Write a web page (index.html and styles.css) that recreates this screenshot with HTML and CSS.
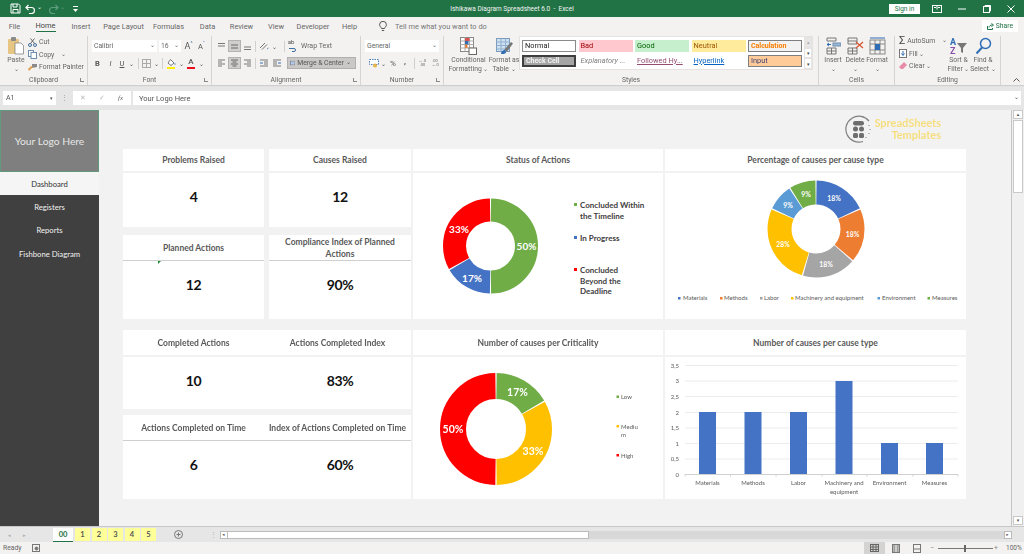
FILE: index.html
```html
<!DOCTYPE html>
<html lang="en">
<head>
<meta charset="utf-8">
<title>Ishikawa Diagram Spreadsheet 6.0 - Excel</title>
<link rel="stylesheet" href="styles.css">
</head>
<body>
<div class="app">
  <header class="titlebar">
    <div class="qat">
      <svg width="11" height="11" viewBox="0 0 11 11" fill="none" stroke="#fff"><path d="M1 1h7.500L10 2.500V10H1z"/><path d="M3 1v3h4V1M3 10V6.500h5V10"/></svg>
      <svg class="qat-undo" width="11" height="10" viewBox="0 0 11 10" fill="none" stroke="#fff" stroke-width="1.200"><path d="M3.500 1L1 3.500 3.500 6M1 3.500h5.500a3 3 0 0 1 0 6H4"/></svg>
      <span class="qat-caret">⌄</span>
      <svg class="qat-redo" width="11" height="10" viewBox="0 0 11 10" fill="none" stroke="#5f9d7f" stroke-width="1.200"><path d="M7.500 1L10 3.500 7.500 6M10 3.500H4.500a3 3 0 0 0 0 6H7"/></svg>
      <span class="qat-caret dim">⌄</span>
      <svg class="qat-more" width="7" height="8" viewBox="0 0 7 8" fill="#fff"><rect x="1" y="1" width="5" height="1"/><path d="M1 4h5L3.500 7z"/></svg>
    </div>
    <div class="doc-title">Ishikawa Diagram Spreadsheet 6.0&nbsp; -&nbsp; Excel</div>
    <div class="win">
      <button class="signin">Sign in</button>
      <svg class="win-ribbon" width="10" height="8" viewBox="0 0 10 8" fill="none" stroke="#fff"><rect x=".5" y=".5" width="9" height="7"/><path d="M5 .5v4M2 2.500h2M6 2.500h2"/></svg>
      <svg class="win-min" width="8" height="8" viewBox="0 0 8 8" stroke="#fff"><path d="M0 4h8"/></svg>
      <svg class="win-max" width="8" height="8" viewBox="0 0 8 8" fill="none" stroke="#fff"><rect x=".5" y="1.500" width="6" height="6"/><path d="M2 1.500V.5h5.500V6h-1"/></svg>
      <svg class="win-close" width="8" height="8" viewBox="0 0 8 8" stroke="#fff"><path d="M.5.5l7 7M7.500.5l-7 7"/></svg>
    </div>
  </header>

  <nav class="tabs">
    <span class="tab">File</span>
    <span class="tab tab-on"><span>Home</span></span>
    <span class="tab">Insert</span>
    <span class="tab">Page Layout</span>
    <span class="tab">Formulas</span>
    <span class="tab">Data</span>
    <span class="tab">Review</span>
    <span class="tab">View</span>
    <span class="tab">Developer</span>
    <span class="tab">Help</span>
    <svg class="bulb" width="8" height="11" viewBox="0 0 8 11" fill="none" stroke="#555"><path d="M2.500 7.500C2 6 .6 5.500.6 3.700a3.400 3.400 0 0 1 6.800 0C7.400 5.500 6 6 5.500 7.500zM2.800 9.500h2.400"/></svg>
    <span class="tellme">Tell me what you want to do</span>
    <span class="share"><svg width="7" height="7" viewBox="0 0 7 7" fill="none" stroke="#217346"><path d="M.5 3v3.500h5V5M2 4.500C2 3 3.500 2 5 2M4.500.5L6.500 2 4.500 3.500"/></svg>Share</span>
  </nav>

  <section class="ribbon">
    <div class="group g-clip">
      <div class="gbody">
        <div class="large paste">
          <svg width="16" height="18" viewBox="0 0 16 18"><rect x="0" y="2" width="11" height="15" rx="1" fill="#e7c582"/><rect x="3" y="0" width="5" height="4" rx="1" fill="#8a8a8a"/><path d="M7 6h6l2.500 2.500V17H7z" fill="#fff" stroke="#777" stroke-width=".7"/></svg>
          <span class="cap">Paste</span><span class="cap car">⌄</span>
        </div>
        <div class="clip-list">
          <div class="clip-row"><svg width="9" height="9" viewBox="0 0 9 9" fill="none" stroke="#3f6f9f"><circle cx="2" cy="7" r="1.500"/><circle cx="7" cy="7" r="1.500"/><path d="M2.500 5.500L6.500.5M6.500 5.500L2.500.5" stroke="#666"/></svg><span>Cut</span></div>
          <div class="clip-row"><svg width="9" height="9" viewBox="0 0 9 9" fill="#fff" stroke="#6d8db0"><rect x=".5" y=".5" width="5" height="6"/><rect x="3" y="2.500" width="5.500" height="6"/></svg><span>Copy</span><span class="car copy-car">⌄</span></div>
          <div class="clip-row"><svg width="9" height="9" viewBox="0 0 9 9"><path d="M4 1l5 0v3L4 5z" fill="#8a8a8a"/><path d="M5 4L1 8l-1-2 3-3z" fill="#e0a050"/></svg><span>Format Painter</span></div>
        </div>
      </div>
      <div class="glabel">Clipboard<i class="launch"></i></div>
    </div>

    <div class="group g-font">
      <div class="gbody stack">
        <div class="row">
          <span class="combo w65">Calibri<b>⌄</b></span>
          <span class="combo w22">16<b>⌄</b></span>
          <span class="ico w13 big-a">A<sup>^</sup></span>
          <span class="ico w13 small-a">A<sup>ˇ</sup></span>
        </div>
        <div class="row">
          <span class="ico w13 tb">B</span><span class="ico w13 ti">I</span><span class="ico w10 tu">U</span><span class="ico w8 car">⌄</span>
          <i class="vsep m4"></i>
          <span class="ico w12"><svg width="9" height="9" viewBox="0 0 9 9" fill="none" stroke="#aaa"><rect x=".5" y=".5" width="8" height="8"/><path d="M4.500 0v9M0 4.500h9"/></svg></span><span class="ico w8 car">⌄</span>
          <i class="vsep m2"></i>
          <span class="ico w12 under"><svg width="9" height="7" viewBox="0 0 9 7" fill="#fff" stroke="#777"><path d="M3.500.5L7 4 4 6.500 1 4z"/><circle cx="8" cy="5" r=".8" fill="#5b8bd0" stroke="none"/></svg><i class="bar-y"></i></span><span class="ico w8 car">⌄</span>
          <span class="ico w12 under fc">A<i class="bar-r"></i></span><span class="ico w8 car">⌄</span>
        </div>
      </div>
      <div class="glabel">Font<i class="launch"></i></div>
    </div>

    <div class="group g-align">
      <div class="gbody stack">
        <div class="row">
          <span class="ico w13"><svg class="lines" width="9" height="9" viewBox="0 0 9 9" stroke="#777"><path d="M1 1.500h7M1 4h7"/></svg></span>
          <span class="ico w13 on"><svg width="9" height="9" viewBox="0 0 9 9" stroke="#666"><path d="M1 3h7M1 6h7"/></svg></span>
          <span class="ico w13"><svg width="9" height="9" viewBox="0 0 9 9" stroke="#777"><path d="M1 5h7M1 7.500h7"/></svg></span>
          <i class="vsep m1"></i>
          <span class="ico w12 ml2"><svg width="10" height="9" viewBox="0 0 10 9" fill="none" stroke="#777"><path d="M1 6l5-5M3 7.500l5-5"/><path d="M8 7l1.500-1" stroke="#6d8db0"/></svg></span><span class="ico w8 car">⌄</span>
          <i class="vsep m6"></i>
          <span class="ico w12 wrapic"><svg width="10" height="11" viewBox="0 0 10 11" fill="none" stroke="#666"><path d="M1 7.500h5a1.500 1.500 0 0 1 0 3H4" stroke="#3f6f9f"/></svg></span>
          <span class="plain">Wrap Text</span>
        </div>
        <div class="row">
          <span class="ico w13"><svg width="9" height="8" viewBox="0 0 9 8" stroke="#777"><path d="M1 1h7M1 3h4M1 5h7M1 7h4"/></svg></span>
          <span class="ico w13 on"><svg width="9" height="8" viewBox="0 0 9 8" stroke="#666"><path d="M1 1h7M2.500 3h4M1 5h7M2.500 7h4"/></svg></span>
          <span class="ico w13"><svg width="9" height="8" viewBox="0 0 9 8" stroke="#777"><path d="M1 1h7M4 3h4M1 5h7M4 7h4"/></svg></span>
          <i class="vsep m1"></i>
          <span class="ico w12 ml2"><svg width="10" height="8" viewBox="0 0 10 8" stroke="#777"><path d="M1 1h8M5 3h4M5 5h4M1 7h8"/><path d="M1 4h3" stroke="#2f6db5"/></svg></span>
          <span class="ico w13"><svg width="10" height="8" viewBox="0 0 10 8" stroke="#777"><path d="M1 1h8M1 3h4M1 5h4M1 7h8"/><path d="M6 4h3" stroke="#2f6db5"/></svg></span>
          <span class="merge"><svg width="10" height="8" viewBox="0 0 10 8" fill="#fff" stroke="#667"><rect x=".5" y=".5" width="9" height="7"/><path d="M.5 2.500h9M.5 5.500h9" stroke="#2f6db5"/></svg><span>Merge &amp; Center</span><b>⌄</b></span>
        </div>
      </div>
      <div class="glabel">Alignment<i class="launch"></i></div>
    </div>

    <div class="group g-num">
      <div class="gbody stack">
        <div class="row"><span class="combo w74">General<b>⌄</b></span></div>
        <div class="row">
          <span class="ico w11 num-first"><svg width="10" height="9" viewBox="0 0 10 9"><rect x=".5" y=".5" width="9" height="5" fill="#fff" stroke="#4a7fc0" stroke-dasharray="1.500 1"/><circle cx="6" cy="6.500" r="2" fill="#e8b34a"/></svg></span><span class="ico w8 car">⌄</span>
          <span class="ico w12 tsym">%</span><span class="ico w12 tcomma">,</span>
          <i class="vsep m3"></i>
          <span class="ico w13 dec">←.0<br>.00</span><span class="ico w12 dec">.00<br>→.0</span>
        </div>
      </div>
      <div class="glabel">Number<i class="launch"></i></div>
    </div>

    <div class="group g-styles">
      <div class="gbody pad4">
        <div class="large w41">
          <svg width="17" height="18" viewBox="0 0 17 18"><rect x=".5" y=".5" width="13" height="14" fill="#fff" stroke="#888"/><path d="M.5 4h13M.5 7.500h13M.5 11h13M5 .5v14M9.500.5v14" stroke="#aaa" fill="none"/><rect x="5" y="1" width="4.500" height="3" fill="#d9544d"/><rect x="5" y="4" width="3.500" height="3.500" fill="#2f6db5"/><rect x="5" y="7.500" width="2.500" height="3.500" fill="#e0823d"/><rect x="9" y="11" width="7.500" height="6.500" fill="#fff" stroke="#666"/></svg>
          <span class="cap">Conditional</span><span class="cap">Formatting <b class="car">⌄</b></span>
        </div>
        <div class="large w30">
          <svg width="17" height="18" viewBox="0 0 17 18"><rect x=".5" y="1.500" width="13" height="13" fill="#cfe0f1" stroke="#7a9bbd"/><path d="M.5 5h13M.5 8.500h13M.5 12h13M5 1.500v13M9.500 1.500v13" stroke="#8fb0d0" fill="none"/><path d="M8 13L15 5l2 1.500-6 8z" fill="#777"/><path d="M5 17c0-3 2-4 4-4l1 2c0 2-3 2-5 2z" fill="#2f6db5"/></svg>
          <span class="cap">Format as</span><span class="cap">Table <b class="car">⌄</b></span>
        </div>
        <div class="gallery">
          <div class="cells">
            <span class="st st-normal">Normal</span><span class="st st-bad">Bad</span><span class="st st-good">Good</span><span class="st st-neutral">Neutral</span><span class="st st-calc">Calculation</span>
            <span class="st st-check">Check Cell</span><span class="st st-expl">Explanatory ...</span><span class="st st-fol">Followed Hy...</span><span class="st st-hyp">Hyperlink</span><span class="st st-input">Input</span>
          </div>
          <div class="gscroll"><i class="gs gs-dis">▴</i><i class="gs">▾</i><i class="gs">▾</i></div>
        </div>
      </div>
      <div class="glabel">Styles</div>
    </div>

    <div class="group g-cells">
      <div class="gbody pad3">
        <div class="large w22">
          <svg width="15" height="18" viewBox="0 0 15 18" fill="none" stroke="#777"><path d="M1 1h9v3H1zM1 11h9v6H1zM1 14h9M5.500 11v6"/><rect x="7" y="6" width="8" height="3" fill="#9db8d6" stroke="#6d8db0"/><path d="M1 7.500h4M3 6l-2 1.500L3 9" stroke="#2f6db5"/></svg>
          <span class="cap">Insert</span><span class="cap car">⌄</span>
        </div>
        <div class="large w22">
          <svg width="17" height="18" viewBox="0 0 17 18" fill="none" stroke="#777"><path d="M1 1h9v3H1zM1 4v3h9V4M1 11h9v6H1zM1 14h9M5.500 11v6"/><path d="M9 5l7 6M16 5l-7 6" stroke="#d9542f" stroke-width="1.300"/></svg>
          <span class="cap">Delete</span><span class="cap car">⌄</span>
        </div>
        <div class="large w22">
          <svg width="17" height="18" viewBox="0 0 17 18" fill="none" stroke="#888"><rect x="1" y="3" width="15" height="14"/><path d="M1 7h15M1 13h15M6 3v14M11 3v14"/><rect x="6" y="7" width="5" height="6" fill="#2f6db5" stroke="none"/><path d="M1 1h15" stroke="#2f6db5"/></svg>
          <span class="cap">Format</span><span class="cap car">⌄</span>
        </div>
      </div>
      <div class="glabel">Cells</div>
    </div>

    <div class="group g-edit">
      <div class="gbody">
        <div class="edit-list">
          <div class="edit-row"><span class="sigma">Σ</span><span>AutoSum</span><b class="car autosum-car">⌄</b></div>
          <div class="edit-row"><svg width="8" height="9" viewBox="0 0 8 9" fill="#fff" stroke="#777"><rect x=".5" y=".5" width="7" height="8"/><path d="M4 2v4M2.500 4.500L4 6.500l1.500-2" stroke="#2f6db5" fill="none"/></svg><span>Fill <b class="car">⌄</b></span></div>
          <div class="edit-row"><svg width="8" height="8" viewBox="0 0 8 8"><path d="M5 0l3 3-4 4H2L0 5z" fill="#e58ca6"/></svg><span>Clear <b class="car">⌄</b></span></div>
        </div>
        <div class="large w23">
          <svg width="17" height="18" viewBox="0 0 17 18"><text class="az az-a" x="0" y="8">A</text><text class="az az-z" x="0" y="17">Z</text><path d="M7 6h10l-4 5v5l-2-1v-4z" fill="#777"/></svg>
          <span class="cap">Sort &amp;</span><span class="cap">Filter <b class="car">⌄</b></span>
        </div>
        <div class="large w26">
          <svg width="17" height="18" viewBox="0 0 17 18" fill="none" stroke="#2f6db5" stroke-width="1.500"><circle cx="10.500" cy="6.500" r="5"/><path d="M7 10.500L1.500 16.500" stroke-width="2"/></svg>
          <span class="cap">Find &amp;</span><span class="cap">Select <b class="car">⌄</b></span>
        </div>
      </div>
      <div class="glabel">Editing</div>
    </div>
    <div class="collapse"><svg width="7" height="4" viewBox="0 0 7 4" fill="none" stroke="#555"><path d="M.5 3.500l3-3 3 3"/></svg></div>
  </section>

  <section class="formula">
    <span class="namebox">A1<b>▾</b></span>
    <span class="fdots">⋮</span>
    <span class="fbtns"><i>✕</i><i>✓</i><i class="fx">fx</i></span>
    <span class="finput">Your Logo Here<b>⌄</b></span>
  </section>

  <main class="main">
    <aside class="side">
      <div class="logo-cell">Your Logo Here</div>
      <div class="nav nav-on">Dashboard</div>
      <div class="nav">Registers</div>
      <div class="nav">Reports</div>
      <div class="nav">Fishbone Diagram</div>
    </aside>

    <div class="canvas">
      <div class="brand">
        <svg width="100" height="32" viewBox="0 0 100 32">
          <path d="M24 8A13 13 0 1 0 18 28.500" fill="none" stroke="#808080" stroke-width="1.200"/>
          <path d="M24 12v1M25 16v1M24 20v1M21 24v1" stroke="#808080" stroke-dasharray="1 1"/>
          <rect x="8" y="8" width="11" height="4.500" rx="2.200" fill="#6e6e6e"/>
          <circle cx="10.500" cy="16" r="2.500" fill="#6e6e6e"/><circle cx="16.500" cy="16" r="2.500" fill="#6e6e6e"/>
          <rect x="8" y="20" width="5" height="5" rx="1.500" fill="#6e6e6e"/><rect x="14" y="20" width="5" height="5" rx="1.500" fill="#6e6e6e"/>
          <text class="brand-t" x="96" y="14" text-anchor="end">SpreadSheets</text>
          <text class="brand-t" x="96" y="26" text-anchor="end">Templates</text>
        </svg>
      </div>

      <div class="dash">
        <div class="kpis kpis-top">
          <div class="kpi"><div class="kh">Problems Raised</div><div class="kb">4</div></div>
          <div class="kpi"><div class="kh">Causes Raised</div><div class="kb">12</div></div>
          <div class="kpi lined"><div class="kh">Planned Actions</div><div class="kb"><i class="flag"></i>12</div></div>
          <div class="kpi lined"><div class="kh kh-wrap">Compliance Index of Planned Actions</div><div class="kb">90%</div></div>
        </div>

        <div class="chart ch-top">
          <div class="kh">Status of Actions</div>
          <div class="cb">
            <svg viewBox="413 173 250 146" width="250" height="146">
              <g class="ring1" fill="none" stroke-width="23" transform="rotate(-90 490.500 246)">
                <circle cx="490.500" cy="246" r="36" pathLength="100" stroke="#70ad47" stroke-dasharray="49.600 100" stroke-dashoffset="-.2"/>
                <circle cx="490.500" cy="246" r="36" pathLength="100" stroke="#4472c4" stroke-dasharray="16.300 100" stroke-dashoffset="-50.200"/>
                <circle cx="490.500" cy="246" r="36" pathLength="100" stroke="#ff0000" stroke-dasharray="32.900 100" stroke-dashoffset="-66.900"/>
              </g>
              <text class="dl dl-b" x="526.500" y="250">50%</text>
              <text class="dl dl-b" x="472" y="281.500">17%</text>
              <text class="dl dl-b" x="459" y="232.500">33%</text>
              <rect x="574" y="203" width="3" height="3" fill="#70ad47"/><text class="lg-b" x="580" y="208">Concluded Within</text><text class="lg-b" x="580" y="218.500">the Timeline</text>
              <rect x="574" y="236" width="3" height="3" fill="#4472c4"/><text class="lg-b" x="580" y="240.500">In Progress</text>
              <rect x="574" y="268" width="3" height="3" fill="#ff0000"/><text class="lg-b" x="580" y="273">Concluded</text><text class="lg-b" x="580" y="283.500">Beyond the</text><text class="lg-b" x="580" y="294">Deadline</text>
            </svg>
          </div>
        </div>

        <div class="chart ch-top">
          <div class="kh">Percentage of causes per cause type</div>
          <div class="cb">
            <svg viewBox="665 173 301 146" width="301" height="146">
              <g fill="none" stroke-width="24" transform="rotate(-90 816 229)">
                <circle cx="816" cy="229" r="36.500" pathLength="100" stroke="#4472c4" stroke-dasharray="17.780 100" stroke-dashoffset="-.2"/>
                <circle cx="816" cy="229" r="36.500" pathLength="100" stroke="#ed7d31" stroke-dasharray="17.780 100" stroke-dashoffset="-18.380"/>
                <circle cx="816" cy="229" r="36.500" pathLength="100" stroke="#a5a5a5" stroke-dasharray="17.780 100" stroke-dashoffset="-36.560"/>
                <circle cx="816" cy="229" r="36.500" pathLength="100" stroke="#ffc000" stroke-dasharray="26.870 100" stroke-dashoffset="-54.750"/>
                <circle cx="816" cy="229" r="36.500" pathLength="100" stroke="#5b9bd5" stroke-dasharray="8.690 100" stroke-dashoffset="-82.020"/>
                <circle cx="816" cy="229" r="36.500" pathLength="100" stroke="#70ad47" stroke-dasharray="8.690 100" stroke-dashoffset="-91.110"/>
              </g>
              <text class="dl dl-s" x="834" y="201">18%</text>
              <text class="dl dl-s" x="852.500" y="237">18%</text>
              <text class="dl dl-s" x="826" y="267">18%</text>
              <text class="dl dl-s" x="783" y="247">28%</text>
              <text class="dl dl-s" x="788" y="208">9%</text>
              <text class="dl dl-s" x="806" y="197">9%</text>
              <rect x="678" y="297" width="2.500" height="2.500" fill="#4472c4"/><text class="lg" x="683" y="300.300">Materials</text>
              <rect x="720" y="297" width="2.500" height="2.500" fill="#ed7d31"/><text class="lg" x="724" y="300.300">Methods</text>
              <rect x="760" y="297" width="2.500" height="2.500" fill="#a5a5a5"/><text class="lg" x="764" y="300.300">Labor</text>
              <rect x="791" y="297" width="2.500" height="2.500" fill="#ffc000"/><text class="lg" x="795" y="300.300">Machinery and equipment</text>
              <rect x="877.500" y="297" width="2.500" height="2.500" fill="#5b9bd5"/><text class="lg" x="882" y="300.300">Environment</text>
              <rect x="927.500" y="297" width="2.500" height="2.500" fill="#70ad47"/><text class="lg" x="932" y="300.300">Measures</text>
            </svg>
          </div>
        </div>

        <div class="kpis kpis-bottom">
          <div class="kpi tight"><div class="kh">Completed Actions</div><div class="kb">10</div></div>
          <div class="kpi tight"><div class="kh">Actions Completed Index</div><div class="kb shift">83%</div></div>
          <div class="kpi lined"><div class="kh">Actions Completed on Time</div><div class="kb">6</div></div>
          <div class="kpi lined"><div class="kh">Index of Actions Completed on Time</div><div class="kb shift">60%</div></div>
        </div>

        <div class="chart ch-bot">
          <div class="kh">Number of causes per Criticality</div>
          <div class="cb">
            <svg viewBox="413 357 250 142" width="250" height="142">
              <g fill="none" stroke-width="26" transform="rotate(-90 496 429)">
                <circle cx="496" cy="429" r="43" pathLength="100" stroke="#70ad47" stroke-dasharray="16.270 100" stroke-dashoffset="-.2"/>
                <circle cx="496" cy="429" r="43" pathLength="100" stroke="#ffc000" stroke-dasharray="32.930 100" stroke-dashoffset="-16.870"/>
                <circle cx="496" cy="429" r="43" pathLength="100" stroke="#ff0000" stroke-dasharray="49.600 100" stroke-dashoffset="-50.200"/>
              </g>
              <text class="dl dl-l" x="517.500" y="396">17%</text>
              <text class="dl dl-l" x="533" y="455">33%</text>
              <text class="dl dl-l" x="453" y="433">50%</text>
              <rect x="616.500" y="395.500" width="2.500" height="2.500" fill="#70ad47"/><text class="lg" x="621" y="399">Low</text>
              <rect x="616.500" y="425" width="2.500" height="2.500" fill="#ffc000"/><text class="lg" x="621" y="428.500">Mediu</text><text class="lg" x="621" y="436.500">m</text>
              <rect x="616.500" y="454" width="2.500" height="2.500" fill="#ff0000"/><text class="lg" x="621" y="457.500">High</text>
            </svg>
          </div>
        </div>

        <div class="chart ch-bot">
          <div class="kh">Number of causes per cause type</div>
          <div class="cb">
            <svg viewBox="665 357 301 142" width="301" height="142">
              <g stroke="#ececec"><path d="M685 365.500h273M685 381h273M685 396.500h273M685 412.500h273M685 428h273M685 443.500h273M685 459h273"/></g>
              <path d="M685 474.500h273M685 474.500v2M730.500 474.500v2M776 474.500v2M822 474.500v2M867 474.500v2M913 474.500v2M958 474.500v2" stroke="#d0d0d0" fill="none"/>
              <g fill="#4472c4">
                <rect x="699" y="412" width="17" height="62"/><rect x="744.500" y="412" width="17" height="62"/><rect x="790" y="412" width="17" height="62"/><rect x="835.500" y="381" width="17" height="93"/><rect x="881" y="443" width="17" height="31"/><rect x="926" y="443" width="17" height="31"/>
              </g>
              <g class="lg ax-y" text-anchor="end">
                <text x="679" y="367.500">3,5</text><text x="679" y="383">3</text><text x="679" y="398.500">2,5</text><text x="679" y="414.500">2</text><text x="679" y="430">1,5</text><text x="679" y="445.500">1</text><text x="679" y="461">0,5</text><text x="679" y="476.500">0</text>
              </g>
              <g class="lg ax-x" text-anchor="middle">
                <text x="707.500" y="485">Materials</text><text x="753" y="485">Methods</text><text x="798.500" y="485">Labor</text><text x="844" y="485">Machinery and</text><text x="844" y="493.500">equipment</text><text x="889.500" y="485">Environment</text><text x="934.500" y="485">Measures</text>
              </g>
            </svg>
          </div>
        </div>
      </div>
    </div>

    <div class="vscroll">
      <span class="sbtn">▴</span>
      <span class="vthumb"></span>
      <span class="sbtn sbtn-end">▾</span>
    </div>
  </main>

  <section class="sheetbar">
    <span class="sheet-nav"><i>◂</i><i>▸</i></span>
    <span class="stab stab-on">00</span>
    <span class="stab">1</span><span class="stab">2</span><span class="stab">3</span><span class="stab">4</span><span class="stab">5</span>
    <svg class="addsheet" width="9" height="9" viewBox="0 0 9 9" fill="none" stroke="#777"><circle cx="4.500" cy="4.500" r="4"/><path d="M2.500 4.500h4M4.500 2.500v4"/></svg>
    <span class="tsplit">⋮</span>
    <div class="hscroll">
      <span class="hbtn">◂</span>
      <span class="hthumb"></span>
      <span class="hbtn hbtn-end">▸</span>
    </div>
  </section>

  <footer class="status">
    <span class="ready">Ready</span>
    <svg class="macro" width="8" height="8" viewBox="0 0 8 8" fill="none" stroke="#777"><rect x=".5" y=".5" width="7" height="7"/><circle cx="4.500" cy="4.500" r="1.500" fill="#777"/></svg>
    <div class="views">
      <span class="view view-on"><svg width="9" height="8" viewBox="0 0 9 8" fill="none" stroke="#666"><rect x=".5" y=".5" width="8" height="7"/><path d="M3 .5v7M6 .5v7M.5 3h8M.5 5.500h8"/></svg></span>
      <span class="view"><svg width="8" height="9" viewBox="0 0 8 9" fill="none" stroke="#777"><rect x=".5" y=".5" width="7" height="8"/><rect x="2" y=".5" width="4" height="8" fill="#ccc"/></svg></span>
      <span class="view"><svg width="8" height="9" viewBox="0 0 8 9" fill="none" stroke="#777"><rect x=".5" y=".5" width="7" height="8"/><path d="M.5 5h7"/></svg></span>
      <span class="zm-btn zm-minus">−</span>
      <span class="slider"><i></i></span>
      <span class="zm-btn">+</span>
      <span class="zoom">100%</span>
    </div>
  </footer>
</div>
</body>
</html>
```

FILE: styles.css
```css
* { box-sizing: border-box; }
html, body { margin: 0; padding: 0; }
body { width: 1024px; height: 554px; overflow: hidden; background: #f3f2f1; font-family: Roboto, "Noto Sans", sans-serif; color: #555; font-size: 7px; }
i { font-style: normal; }
b { font-weight: normal; }
.app { width: 1024px; height: 554px; display: flex; flex-direction: column; filter: blur(.4px); }

/* title bar */
.titlebar { height: 17px; background: #217346; display: grid; grid-template-columns: 1fr auto 1fr; align-items: center; color: #fff; flex: none; }
.qat { display: flex; align-items: center; padding-left: 10px; }
.qat-undo { margin-left: 4px; }
.qat-caret { font-size: 6px; line-height: 6px; margin: -3px 0 0 1px; width: 7px; }
.qat-caret.dim { color: #5f9d7f; }
.qat-redo { margin-left: 4px; }
.qat-more { margin-left: 5px; }
.doc-title { font-size: 6.500px; color: #f4f4f4; white-space: nowrap; }
.win { display: flex; align-items: center; justify-content: flex-end; }
.signin { width: 31px; height: 10px; background: #fff; border: 0; padding: 0; color: #217346; font: 6.500px Roboto, sans-serif; }
.win-ribbon { margin-left: 12px; }
.win-min { margin-left: 16px; }
.win-max { margin-left: 17px; }
.win-close { margin-left: 16px; margin-right: 9px; }

/* tabs */
.tabs { height: 18px; flex: none; display: grid; grid-template-columns: 29px 33px 38px 47px 43px 35px 33px 36px 38px 35px 12px auto 1fr; align-items: center; background: #f3f2f1; font-size: 7.400px; color: #666; }
.tab { text-align: center; white-space: nowrap; }
.tab-on { color: #444; }
.tab-on span { display: inline-block; padding-bottom: 1px; border-bottom: 1px solid #217346; width: 20px; }
.bulb { margin-left: 12px; }
.tellme { margin-left: 16px; color: #777; white-space: nowrap; }
.share { justify-self: end; margin-right: 6px; width: 36px; height: 12px; background: #fff; display: flex; align-items: center; justify-content: center; gap: 2px; color: #217346; font-size: 6.800px; }

/* ribbon */
.ribbon { height: 50px; flex: none; display: flex; background: #f3f2f1; box-shadow: 0 1px 1px #cfcfcf; position: relative; z-index: 1; }
.group { display: flex; flex-direction: column; position: relative; border-right: 1px solid #d6d4d2; margin-top: 1px; }
.gbody { flex: 1; display: flex; min-height: 0; }
.stack { flex-direction: column; padding-top: 4px; gap: 5px; }
.pad4 { padding-left: 4px; }
.pad3 { padding-left: 3px; }
.glabel { height: 10px; flex: none; line-height: 10px; text-align: center; font-size: 6.800px; color: #666; position: relative; }
.launch { position: absolute; right: 3px; top: 3px; width: 4px; height: 4px; border-left: 1px solid #888; border-bottom: 1px solid #888; }
.g-clip { width: 88px; }
.g-font { width: 124px; }
.g-align { width: 149px; }
.g-num { width: 83px; }
.g-styles { width: 375px; }
.g-cells { width: 76px; }
.g-edit { width: 106px; }
.collapse { flex: 1; display: flex; justify-content: flex-end; align-items: flex-end; padding: 0 4px 3px 0; }
.row { display: flex; align-items: center; height: 12px; flex: none; }
.g-font .row { padding-left: 3px; }
.g-font .row:first-child { padding-left: 4px; }
.g-align .row { padding-left: 3px; }
.g-num .row { padding-left: 4px; }

.large { display: flex; flex-direction: column; align-items: center; padding-top: 1px; flex: none; }
.large svg { height: 18px; flex: none; margin-bottom: 1px; }
.cap { font-size: 6.800px; line-height: 8.500px; white-space: nowrap; color: #666; }
.car { font-size: 6px; color: #666; }
.cap.car { line-height: 7px; }
.paste { width: 24px; margin-left: 4px; }
.w41 { width: 41px; } .w30 { width: 30px; } .w22 { width: 22px; } .w23 { width: 23px; } .w26 { width: 26px; }

.clip-list { padding-top: 1px; display: flex; flex-direction: column; gap: 2.500px; }
.clip-row { display: flex; align-items: center; gap: 2px; height: 10px; font-size: 6.800px; color: #666; white-space: nowrap; }
.copy-car { margin-left: 5px; margin-top: -3px; }

.combo { height: 12px; background: #fff; display: flex; align-items: center; justify-content: space-between; padding: 0 2px; color: #666; font-size: 6.800px; flex: none; }
.combo b { font-size: 6px; margin-top: -3px; }
.w65 { width: 65px; margin-right: 2px; } .w74 { width: 74px; }
.g-font .w22 { width: 22px; margin-right: 1px; }
.ico { height: 12px; display: flex; align-items: center; justify-content: center; flex: none; position: relative; color: #555; }
.w8 { width: 8px; } .w10 { width: 10px; } .w11 { width: 11px; } .w12 { width: 12px; } .w13 { width: 13px; }
.big-a { font-size: 9px; }
.small-a { font-size: 7.500px; }
.big-a sup, .small-a sup { font-size: 5px; color: #3f6fb0; margin-top: -5px; line-height: 5px; }
.tb { font-weight: 700; font-size: 7.500px; }
.ti { font-style: italic; font-size: 7.500px; }
.tu { text-decoration: underline; font-size: 7.500px; }
.fc { font-size: 8px; font-weight: 500; align-items: flex-start; line-height: 10px; }
.under { padding-bottom: 2px; }
.bar-y, .bar-r { position: absolute; left: 2px; right: 2px; bottom: 0; height: 2px; }
.bar-y { background: #ffee00; }
.bar-r { background: #e8101c; }
.vsep { width: 1px; height: 11px; background: #d2d0ce; flex: none; }
.m1 { margin: 0 0 0 1px; } .m2 { margin: 0 2px; } .m3 { margin: 0 1px 0 3px; } .m4 { margin: 0 1px 0 3px; } .m6 { margin: 0 0 0 6px; }
.ml2 { margin-left: 2px; }
.on { background: #d0cfce; outline: 1px solid #b5b3b1; outline-offset: -1px; height: 12px; }
.wrapic { margin-left: 2px; }
.wrapic::before { content: "ab"; position: absolute; top: -1px; left: 1px; font-size: 5.500px; line-height: 7px; color: #444; }
.plain { margin-left: 2px; font-size: 7px; color: #666; white-space: nowrap; }
.merge { margin-left: 4px; width: 69px; height: 12px; background: #c9c8c7; border: 1px solid #b2b0ae; display: flex; align-items: center; padding: 0 2px; gap: 2px; font-size: 6.800px; color: #555; white-space: nowrap; flex: none; }
.merge b { margin-left: auto; margin-right: 2px; margin-top: -3px; font-size: 6px; }
.num-first { margin-left: 3px; }
.tsym { font-size: 8px; }
.tcomma { font-weight: 700; font-size: 8px; margin-top: -3px; }
.dec { font-size: 4px; line-height: 4px; text-align: center; display: block; padding-top: 2px; color: #666; }

.gallery { width: 294px; height: 34px; background: #fff; border: 1px solid #e4e3e2; display: flex; flex: none; }
.cells { width: 284px; display: grid; grid-template-columns: repeat(5, 54px); column-gap: 2.500px; row-gap: 3px; padding: 2.500px 0 0 2px; grid-auto-rows: 12px; }
.st { font-size: 7.400px; line-height: 12px; padding-left: 2px; white-space: nowrap; overflow: hidden; }
.st-normal { border: 1px solid #8a8a8a; line-height: 10px; color: #222; font-size: 7.400px; }
.st-bad { background: #ffc7ce; color: #9c0006; }
.st-good { background: #c6efce; color: #006100; }
.st-neutral { background: #ffeb9c; color: #9c5700; }
.st-calc { background: #f2f2f2; border: 1px solid #7f7f7f; line-height: 10px; color: #fa7d00; font-weight: 700; font-size: 7px; }
.st-check { background: #a5a5a5; border: 2px double #3f3f3f; line-height: 8px; color: #f2f2f2; font-weight: 700; font-size: 7px; }
.st-expl { color: #7f7f7f; font-style: italic; }
.st-fol { color: #954f72; text-decoration: underline; }
.st-hyp { color: #0563c1; text-decoration: underline; }
.st-input { background: #ffcc99; border: 1px solid #7f7f7f; line-height: 10px; color: #3f3f76; }
.gscroll { width: 8px; margin-left: auto; display: flex; flex-direction: column; }
.gs { flex: 1; font-size: 5px; display: flex; align-items: center; justify-content: center; border: 1px solid #e4e3e2; background: #fff; color: #444; }
.gs-dis { background: #e6e6e6; color: #aaa; }

.edit-list { width: 48px; margin-left: 4px; display: flex; flex-direction: column; gap: 2.500px; flex: none; }
.edit-row { height: 10px; display: flex; align-items: center; gap: 2px; font-size: 6.800px; color: #666; white-space: nowrap; }
.sigma { font-size: 11px; line-height: 10px; width: 9px; color: #444; }
.autosum-car { margin-left: 5px; margin-top: -3px; }
.az { font: 700 9px Roboto, sans-serif; }
.az-a { fill: #2f6db5; }
.az-z { fill: #8a4fa8; }

/* formula bar */
.formula { height: 25px; flex: none; background: #e6e6e6; display: flex; align-items: flex-start; padding-top: 6px; }
.namebox { margin-left: 3px; width: 53px; height: 14px; background: #fff; display: flex; justify-content: space-between; align-items: center; padding: 0 3px; font-size: 7px; color: #555; }
.namebox b { font-size: 5px; }
.fdots { width: 17px; height: 14px; text-align: center; line-height: 14px; color: #999; font-size: 7px; }
.fbtns { width: 58px; height: 14px; background: #fff; display: grid; grid-template-columns: repeat(3, 19px); justify-items: center; align-items: center; color: #bbb; font-size: 7px; }
.fx { font-style: italic; font-family: "Liberation Serif", serif; color: #666; }
.finput { margin-left: 2px; width: 888px; height: 14px; background: #fff; display: flex; justify-content: space-between; align-items: center; padding: 0 2px 0 6px; font-size: 7.500px; color: #555; }
.finput b { font-size: 6px; margin-top: -3px; }

/* main */
.main { height: 417px; flex: none; display: flex; background: #f2f2f2; font-family: Lato, "Liberation Sans", sans-serif; border-bottom: 1px solid #c8c8c8; }
.side { width: 99px; flex: none; background: #404040; display: flex; flex-direction: column; position: relative; }
.logo-cell { height: 62px; background: #7f7f7f; border: 1px solid #5f9a7d; display: flex; align-items: center; justify-content: center; color: #e6e6e6; font-size: 10.300px; padding-bottom: 1px; flex: none; }
.nav { height: 23.500px; flex: none; display: flex; align-items: center; justify-content: center; color: #f0f0f0; font-size: 7.700px; font-weight: 400; }
.nav-on { background: #f5f5f5; color: #333; height: 23px; }

.canvas { flex: 1; min-width: 0; padding-left: 24px; border-right: 1px solid #c4c4c4; display: flex; flex-direction: column; }
.brand { height: 39px; flex: none; width: 843px; display: flex; justify-content: flex-end; padding: 3px 21px 0 0; }
.brand-t { font: 700 11px Lato, sans-serif; fill: #f6de7f; }
.dash { display: grid; grid-template-columns: 288px 250px 301px; grid-template-rows: 170px 169px; column-gap: 2px; row-gap: 11px; }

.kpis { display: grid; }
.kpis-top { grid-template-columns: 141px 142px; column-gap: 5px; grid-template-rows: 78px 84px; row-gap: 8px; }
.kpis-bottom { grid-template-columns: 141px 147px; grid-template-rows: 79px 84px; row-gap: 6px; }
.kpi { display: flex; flex-direction: column; min-height: 0; }
.kh { height: 22px; flex: none; background: #fff; display: flex; align-items: center; justify-content: center; text-align: center; font-weight: 700; font-size: 8.500px; line-height: 12px; color: #595959; }
.kh-wrap { padding: 0 12px; }
.kb { flex: 1; margin-top: 2px; background: #fff; display: flex; align-items: center; justify-content: center; font-weight: 700; font-size: 14px; letter-spacing: -.4px; color: #111; padding-bottom: 8px; position: relative; }
.tight .kh { height: 25px; }
.tight .kb { padding-bottom: 6px; margin-top: 2px; }
.lined .kh { height: 26px; border-bottom: 1px solid #cfcfcf; }
.lined .kb { margin-top: 0; padding-bottom: 11px; }
.shift { padding-left: 5px; }
.flag { position: absolute; left: 35px; top: 0; width: 0; height: 0; border-top: 3px solid #1e8a32; border-right: 3px solid transparent; }

.chart { display: flex; flex-direction: column; min-height: 0; }
.cb { flex: 1; margin-top: 2px; background: #fff; min-height: 0; }
.cb svg { display: block; }
.ch-bot .kh { height: 25px; }
.dl { font-family: Lato, sans-serif; font-weight: 700; fill: #fff; text-anchor: middle; }
.dl-b { font-size: 10px; }
.dl-s { font-size: 6.800px; }
.dl-l { font-size: 10.500px; }
.lg-b { font: 700 8px Lato, sans-serif; fill: #404040; }
.lg { font: 400 6px Lato, sans-serif; fill: #595959; }

.vscroll { width: 12px; flex: none; background: #f0f0f0; display: flex; flex-direction: column; align-items: center; }
.sbtn { width: 10px; height: 9px; background: #fff; border: 1px solid #c8c8c8; font-size: 5px; line-height: 7px; text-align: center; color: #555; font-family: "DejaVu Sans", sans-serif; }
.vthumb { width: 10px; height: 73px; margin-top: 1px; background: #fff; border: 1px solid #c8c8c8; }
.sbtn-end { margin-top: auto; margin-bottom: 1px; }

/* sheet bar */
.sheetbar { height: 15px; flex: none; background: #e6e6e6; display: flex; align-items: center; font-family: Lato, sans-serif; }
.sheet-nav { width: 53px; display: grid; grid-template-columns: 15px 15px; padding-left: 8px; font-size: 5px; color: #aaa; font-family: "DejaVu Sans", sans-serif; }
.stab { height: 13px; width: 15px; margin-right: 1.500px; background: #ffff99; display: flex; align-items: center; justify-content: center; font-size: 7.500px; font-weight: 700; color: #555; }
.stab-on { width: 20px; margin-right: 2px; height: 14px; background: #fdfdfd; color: #217346; border-bottom: 1px solid #217346; }
.addsheet { margin-left: 16px; }
.tsplit { margin-left: 27px; color: #aaa; font-size: 7px; }
.hscroll { margin-left: 3px; width: 792px; height: 8px; display: flex; background: #d8d8d8; }
.hbtn { width: 8px; height: 8px; background: #fff; border: 1px solid #bbb; font-size: 4.500px; line-height: 6px; text-align: center; font-family: "DejaVu Sans", sans-serif; color: #555; flex: none; }
.hthumb { width: 361px; background: #fff; border: 1px solid #bbb; border-left: 0; }
.hbtn-end { margin-left: auto; }

/* status */
.status { flex: 1; background: #f3f2f1; display: flex; align-items: center; font-size: 6.800px; color: #666; }
.ready { margin-left: 3px; }
.macro { margin-left: 10px; }
.views { margin-left: auto; display: flex; align-items: center; height: 100%; }
.view { width: 21px; height: 100%; display: flex; align-items: center; justify-content: center; }
.view-on { background: #d4d3d2; }
.zm-btn { width: 6px; font-size: 7px; text-align: center; color: #888; }
.zm-minus { margin-left: 2px; }
.slider { margin: 0 0 0 3px; width: 55px; height: 1px; background: #777; position: relative; }
.slider i { position: absolute; left: 26px; top: -3px; width: 2px; height: 7px; background: #666; }
.zoom { margin: 0 2px 0 7px; width: 16px; font-size: 6.500px; white-space: nowrap; }
```
